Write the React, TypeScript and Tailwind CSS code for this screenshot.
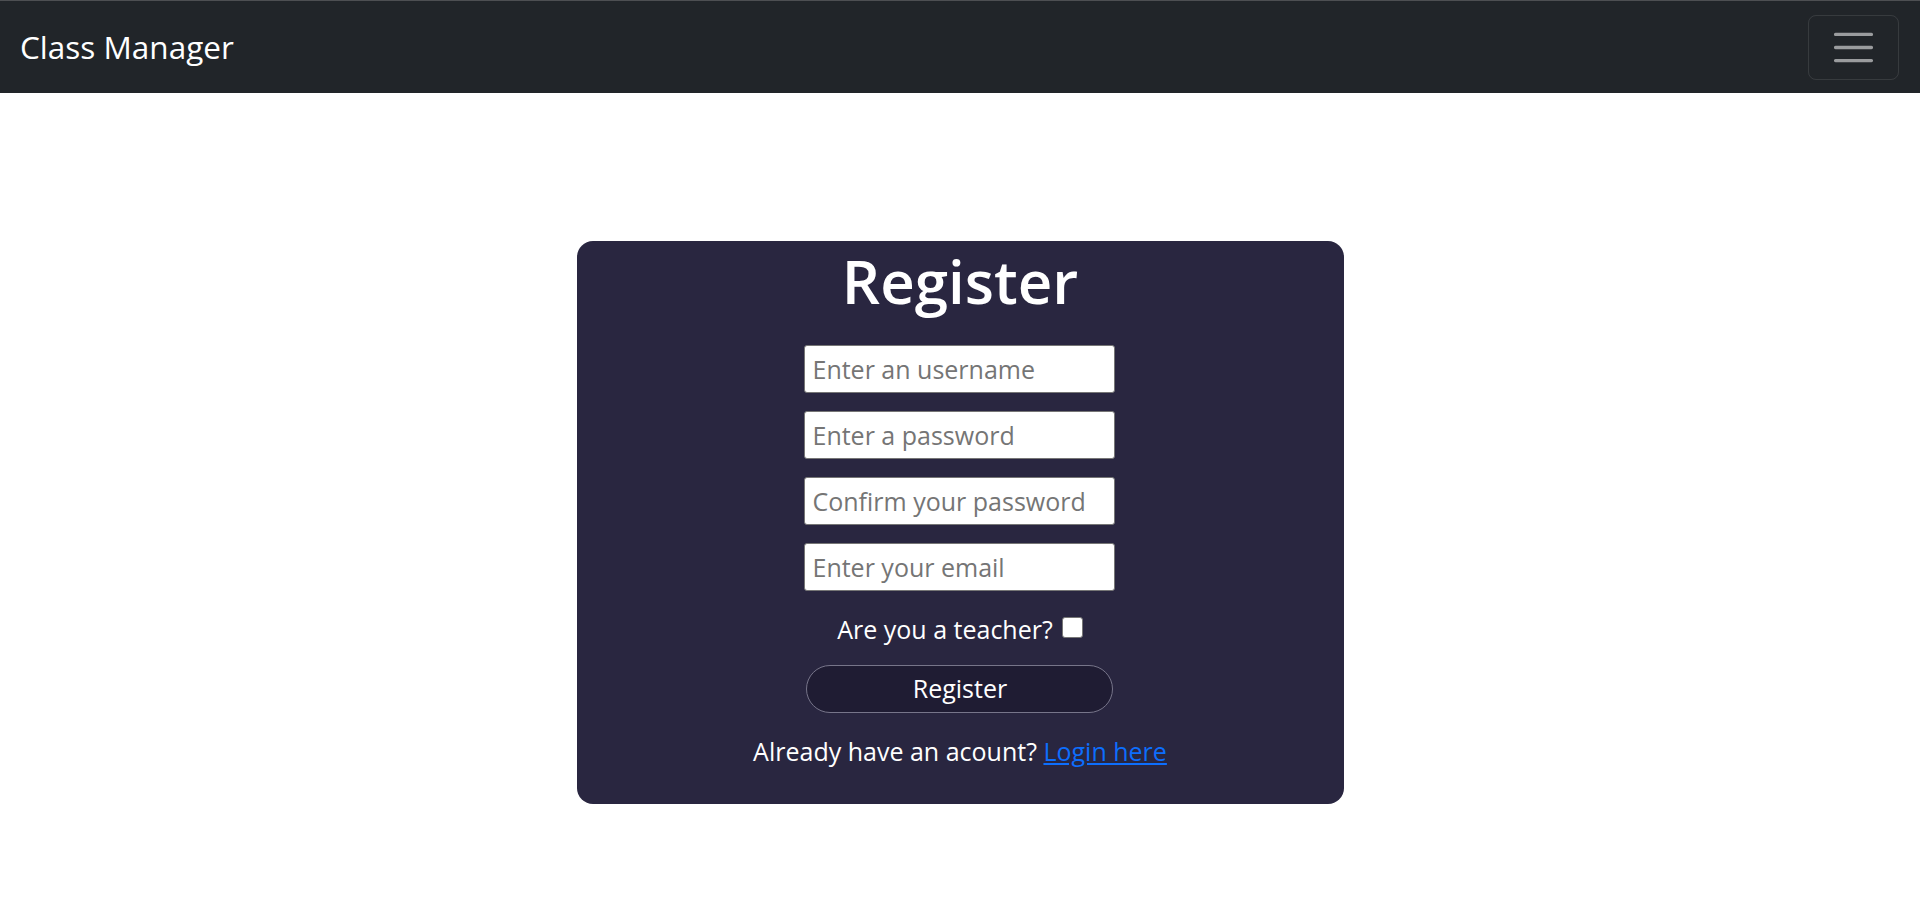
export default function App() {
  return (
    <div className="min-h-screen bg-white font-['Open_Sans',sans-serif]">
      <nav className="h-[93px] bg-[#212529] border-t border-[#4d4f52] flex items-center justify-between pl-[20px] pr-[21px]">
        <span className="text-[31.5px] text-white leading-none">Class Manager</span>
        <button className="w-[91px] h-[65px] border border-white/10 rounded-[8px] flex items-center justify-center">
          <svg width="49" height="49" viewBox="0 0 30 30" fill="none">
            <path
              d="M4 7h22M4 15h22M4 23h22"
              stroke="rgba(255,255,255,0.55)"
              strokeWidth="2"
              strokeLinecap="round"
            />
          </svg>
        </button>
      </nav>

      <div className="w-[767px] mx-auto mt-[148px] rounded-[16px] bg-[#292640] flex flex-col items-center pt-[9px] pb-[33px]">
        <h2 className="text-[60px] leading-[63px] font-semibold text-white">Register</h2>

        <form className="flex flex-col items-center mt-[32px]">
          <div className="flex flex-col gap-[18px]">
            <input
              type="text"
              placeholder="Enter an username"
              className="w-[311px] h-[48px] bg-white border border-[#767676] rounded-[3px] px-[7px] text-[25px] text-black placeholder:text-[#757575] outline-none"
            />
            <input
              type="password"
              placeholder="Enter a password"
              className="w-[311px] h-[48px] bg-white border border-[#767676] rounded-[3px] px-[7px] text-[25px] text-black placeholder:text-[#757575] outline-none"
            />
            <input
              type="password"
              placeholder="Confirm your password"
              className="w-[311px] h-[48px] bg-white border border-[#767676] rounded-[3px] px-[7px] text-[25px] text-black placeholder:text-[#757575] outline-none"
            />
            <input
              type="email"
              placeholder="Enter your email"
              className="w-[311px] h-[48px] bg-white border border-[#767676] rounded-[3px] px-[7px] text-[25px] text-black placeholder:text-[#757575] outline-none"
            />
          </div>

          <label className="mt-[19px] h-[39px] flex items-center text-[25px] text-white">
            Are you a teacher?
            <input
              type="checkbox"
              className="ml-[9px] w-[21px] h-[21px] appearance-none bg-white border border-[#767676] rounded-[3px] -translate-y-[2px]"
            />
          </label>

          <button
            type="button"
            className="mt-[16px] w-[307px] h-[48px] rounded-full border border-[#77758a] bg-[#1f1c33] text-[25px] text-white"
          >
            Register
          </button>

          <p className="mt-[19px] leading-[39px] text-[25px] text-white">
            Already have an acount?{" "}
            <a href="#" className="text-[#0d6efd] underline">
              Login here
            </a>
          </p>
        </form>
      </div>
    </div>
  );
}
